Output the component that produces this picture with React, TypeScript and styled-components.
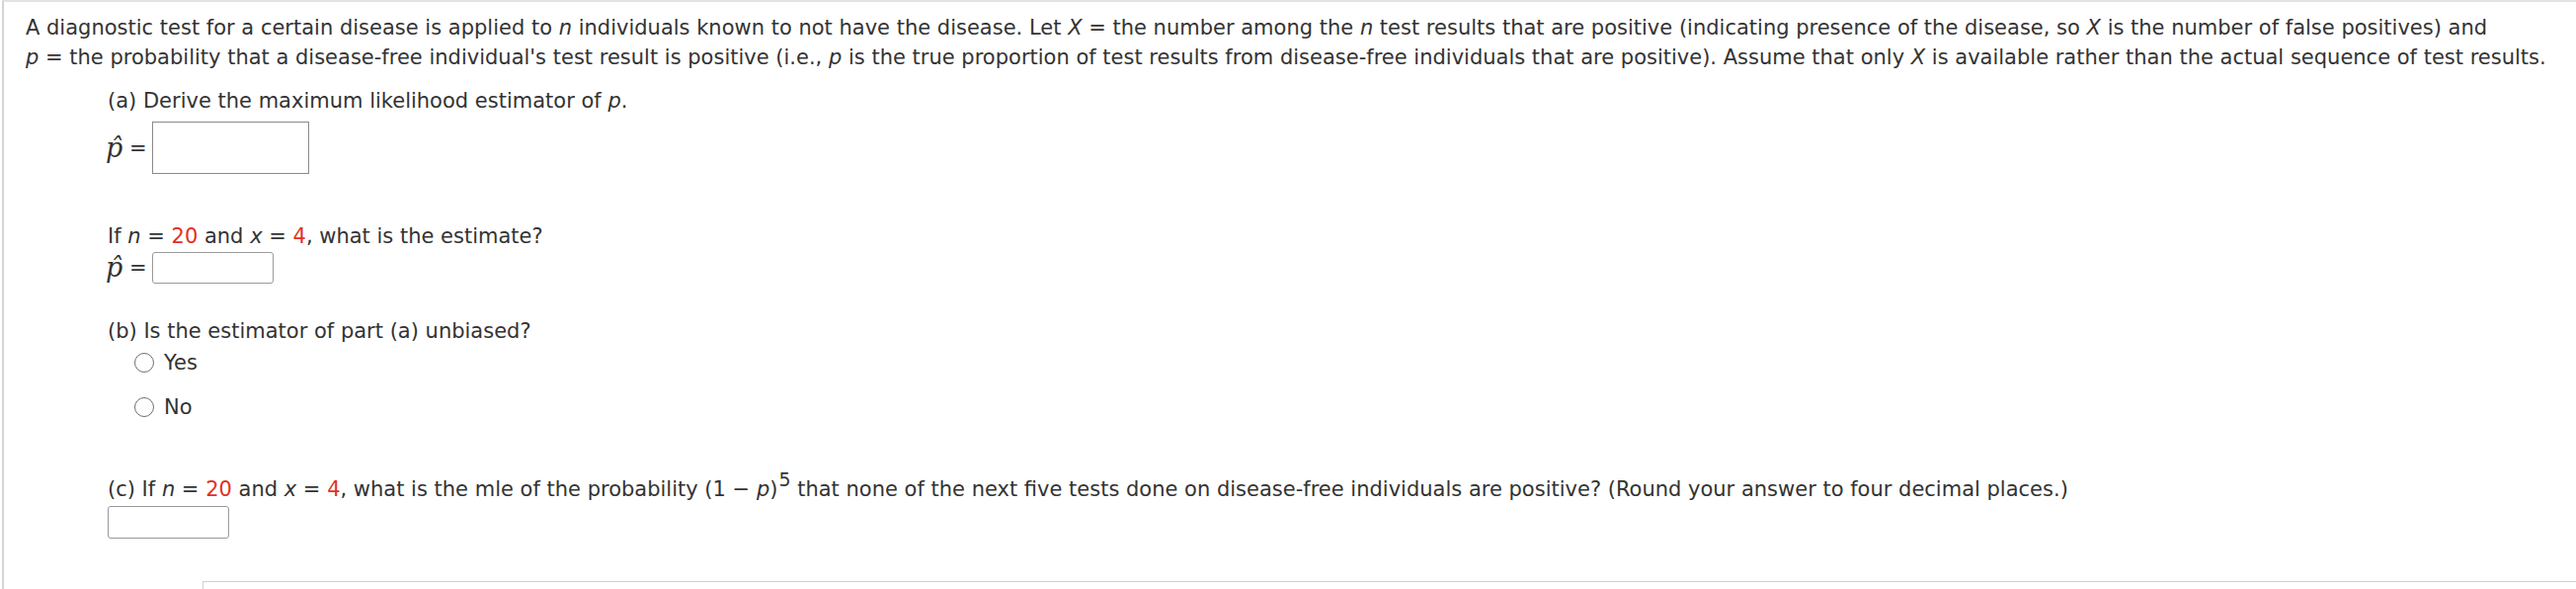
import styled, { createGlobalStyle } from "styled-components";

const GlobalStyle = createGlobalStyle`
	body {
		margin: 0;
		background: #ffffff;
		font-family: "DejaVu Sans", Verdana, sans-serif;
		color: #333333;
	}
`;

const Frame = styled.div`
	margin-left: 2px;
	border-top: 2px solid #e2e2e2;
	border-left: 2px solid #d4d4d4;
	padding: 11px 0 0 22px;
	min-height: 596px;
	box-sizing: border-box;
	font-size: 21px;
	line-height: 30px;
`;

const Intro = styled.p`
	margin: 0;
	white-space: nowrap;
`;

const Parts = styled.div`
	padding-left: 83px;
	display: flex;
	flex-direction: column;
`;

const Line = styled.div<{ $top?: number }>`
	margin-top: ${(p) => p.$top ?? 0}px;
	white-space: nowrap;
`;

const Red = styled.span`
	color: #e2311f;
`;

const Sup = styled.sup`
	font-size: 19px;
	line-height: 0;
	vertical-align: 10px;
	margin-left: 1px;
`;

const AnswerRow = styled.div<{ $top?: number }>`
	display: flex;
	align-items: center;
	margin-top: ${(p) => p.$top ?? 0}px;
`;

const Hat = styled.span`
	font-family: "DejaVu Serif", "Liberation Serif", serif;
	font-style: italic;
	font-size: 27px;
	margin-left: -2px;
	width: 24px;
`;

const Eq = styled.span`
	width: 23px;
`;

const Box = styled.input<{ $w: number; $h: number; $round?: boolean }>`
	width: ${(p) => p.$w}px;
	height: ${(p) => p.$h}px;
	box-sizing: border-box;
	margin: 0;
	border: 1px solid ${(p) => (p.$round ? "#9a9a9a" : "#8a8a8a")};
	border-radius: ${(p) => (p.$round ? "3px" : "0")};
	background: #ffffff;
	outline: none;
`;

const Choices = styled.div`
	padding-left: 27px;
	display: flex;
	flex-direction: column;
	gap: 15px;
	margin-top: 2px;
`;

const Choice = styled.label`
	display: flex;
	align-items: center;
	height: 30px;
`;

const Radio = styled.span`
	flex: none;
	width: 20px;
	height: 20px;
	border: 1.5px solid #6e6e6e;
	border-radius: 50%;
	box-sizing: border-box;
	margin-right: 10px;
`;

const NextPanel = styled.div`
	margin: 43px 0 0 179px;
	height: 20px;
	border-top: 1px solid #d0d0d0;
	border-left: 1px solid #d0d0d0;
`;

const PHat = () => (
	<>
		<Hat>p̂</Hat>
		<Eq>=</Eq>
	</>
);

const App = () => {
	return (
		<>
			<GlobalStyle />
			<Frame>
				<Intro>
					A diagnostic test for a certain disease is applied to <i>n</i> individuals known to not have the disease. Let <i>X</i> = the
					number among the <i>n</i> test results that are positive (indicating presence of the disease, so <i>X</i> is the number of false
					positives) and
					<br />
					<i>p</i> = the probability that a disease-free individual's test result is positive (i.e., <i>p</i> is the true proportion of test
					results from disease-free individuals that are positive). Assume that only <i>X</i> is available rather than the actual sequence of
					test results.
				</Intro>
				<Parts>
					<Line $top={14}>
						(a) Derive the maximum likelihood estimator of <i>p</i>.
					</Line>
					<AnswerRow $top={6}>
						<PHat />
						<Box $w={159} $h={53} />
					</AnswerRow>
					<Line $top={48}>
						If <i>n</i> = <Red>20</Red> and <i>x</i> = <Red>4</Red>, what is the estimate?
					</Line>
					<AnswerRow $top={1}>
						<PHat />
						<Box $w={123} $h={32} $round />
					</AnswerRow>
					<Line $top={33}>(b) Is the estimator of part (a) unbiased?</Line>
					<Choices>
						<Choice>
							<Radio />
							Yes
						</Choice>
						<Choice>
							<Radio />
							No
						</Choice>
					</Choices>
					<Line $top={53}>
						(c) If <i>n</i> = <Red>20</Red> and <i>x</i> = <Red>4</Red>, what is the mle of the probability (1 − <i>p</i>)
						<Sup>5</Sup> that none of the next five tests done on disease-free individuals are positive? (Round your answer to four decimal
						places.)
					</Line>
					<AnswerRow $top={2}>
						<Box $w={123} $h={33} $round />
					</AnswerRow>
				</Parts>
				<NextPanel />
			</Frame>
		</>
	);
};

export default App;
